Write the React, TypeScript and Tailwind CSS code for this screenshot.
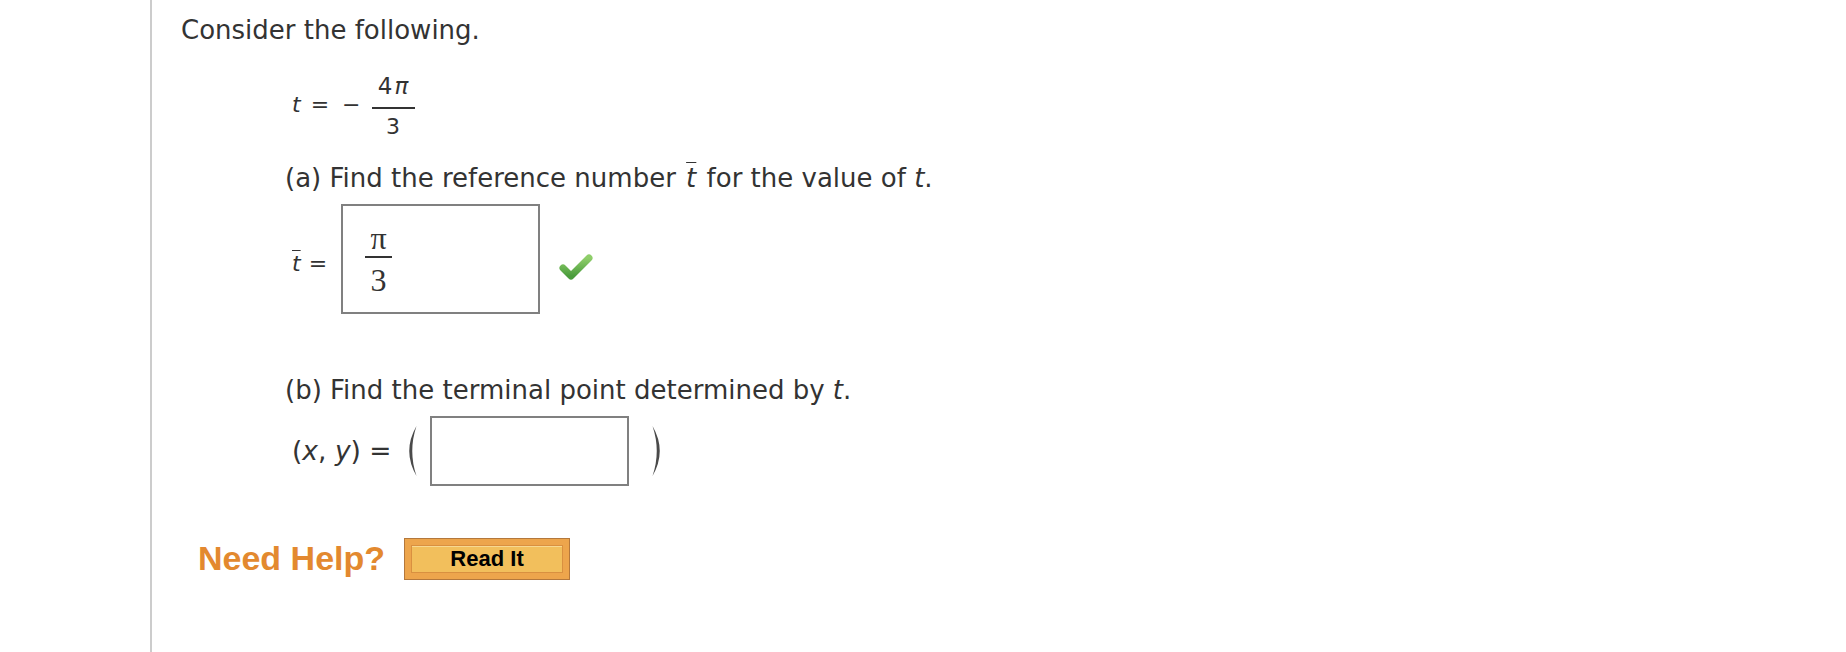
import React from "react";

const sans = { fontFamily: '"DejaVu Sans", Verdana, sans-serif' };
const serif = { fontFamily: '"Liberation Serif", "Times New Roman", serif' };

function TBar() {
  return <span className="italic overline decoration-1">t</span>;
}

function Paren({ flip }: { flip?: boolean }) {
  return (
    <svg width="16" height="52" viewBox="0 0 16 52" className={flip ? "-scale-x-100" : ""}>
      <path d="M14.5 1 Q0 26 14.5 51 Q6 26 14.5 1Z" fill="#4a4a4a" />
    </svg>
  );
}

function Check() {
  return (
    <svg width="34" height="28" viewBox="0 0 34 28">
      <defs>
        <linearGradient id="ck" x1="0" y1="0" x2="0" y2="1">
          <stop offset="0" stopColor="#8fce6a" />
          <stop offset="1" stopColor="#4a9c3c" />
        </linearGradient>
      </defs>
      <path
        d="M4 15 L12 23 L30 5"
        fill="none"
        stroke="url(#ck)"
        strokeWidth="7"
        strokeLinecap="round"
        strokeLinejoin="round"
      />
    </svg>
  );
}

export default function App() {
  return (
    <div className="flex min-h-[652px] bg-white text-[#333]" style={sans}>
      <div className="w-[152px] shrink-0 border-r-2 border-[#cccccc]" />
      <div className="flex flex-col pl-[29px] pt-[15px]">
        <p className="text-[26px] leading-[30px]">Consider the following.</p>

        {/* t = -4pi/3 */}
        <div className="ml-[111px] mt-[30px] flex items-center text-[22px]">
          <span className="mb-[5px] italic">t</span>
          <span className="mb-[5px] ml-[10px]">=</span>
          <span className="mb-[5px] ml-[13px]">−</span>
          <span className="ml-[11px] inline-flex flex-col items-center">
            <span className="text-[23px] leading-[22px]">
              4<span className="ml-[2px] italic">π</span>
            </span>
            <span className="mb-[7px] mt-[10px] h-[2px] w-[43px] bg-[#333]" />
            <span className="leading-[22px]">3</span>
          </span>
        </div>

        <p className="ml-[104px] mt-[25px] text-[26px] leading-[30px]">
          (a) Find the reference number <span className="mx-[2px]"><TBar /></span> for the value of{" "}
          <span className="italic">t</span>.
        </p>

        <div className="mt-[11px] flex items-center">
          <span className="ml-[111px] mt-[8px] text-[22px]">
            <TBar /> <span className="ml-[1px]">=</span>
          </span>
          <div className="ml-[14px] flex h-[110px] w-[199px] items-center border-2 border-[#808080] pl-[22px]">
            <span className="inline-flex flex-col items-center text-[32px]" style={serif}>
              <span className="leading-[28px]">π</span>
              <span className="mb-[7px] mt-[4px] h-[2px] w-[27px] bg-[#333]" />
              <span className="leading-[30px]">3</span>
            </span>
          </div>
          <span className="ml-[19px] mt-[15px]">
            <Check />
          </span>
        </div>

        <p className="ml-[104px] mt-[61px] text-[26px] leading-[30px]">
          (b) Find the terminal point determined by <span className="italic">t</span>.
        </p>

        <div className="mt-[11px] flex items-center">
          <span className="ml-[111px] text-[26.5px]">
            (<span className="italic">x</span>, <span className="italic">y</span>) =
          </span>
          <span className="ml-[10px]">
            <Paren />
          </span>
          <div className="ml-[12px] h-[70px] w-[199px] border-2 border-[#808080]" />
          <span className="ml-[22px]">
            <Paren flip />
          </span>
        </div>

        <div className="mt-[47px] flex items-center" style={{ fontFamily: '"Liberation Sans", Arial, sans-serif' }}>
          <span className="ml-[17px] text-[34px] font-bold text-[#e3892f]">Need Help?</span>
          <button className="ml-[19px] flex h-[42px] w-[166px] items-center justify-center border border-[#b4783c] bg-[#eda54c] p-[6px]">
            <span className="flex h-full w-full items-center justify-center border border-[#d99040] bg-[#f2bf5c] text-[22px] font-bold text-black shadow-[inset_0_1px_0_#f8d890]">
              Read It
            </span>
          </button>
        </div>
      </div>
    </div>
  );
}
